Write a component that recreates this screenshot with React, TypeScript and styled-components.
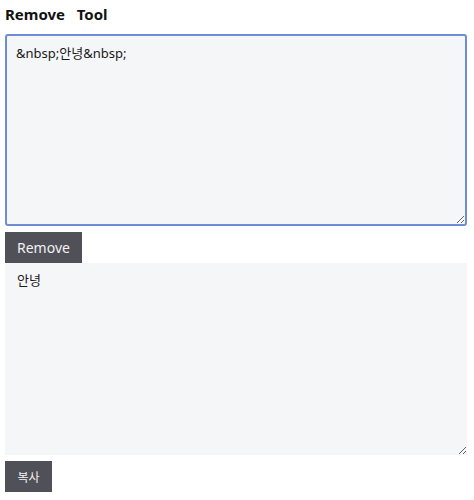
import React, { useState } from 'react'
import styled, { createGlobalStyle } from 'styled-components'

const GlobalStyle = createGlobalStyle`
  body {
    margin: 0;
    background: #ffffff;
    font-family: "Noto Sans", "Noto Sans CJK KR", sans-serif;
    color: #222;
  }
`

const Page = styled.div`
  display: flex;
  flex-direction: column;
  align-items: flex-start;
  padding: 4px 5px;
`

const Title = styled.h1`
  margin: 0 0 10px;
  font-size: 15px;
  line-height: 20px;
  font-weight: 700;
  white-space: pre;
  color: #111;
`

const Area = styled.textarea<{ $focused?: boolean }>`
  box-sizing: border-box;
  width: 462px;
  height: 192px;
  padding: 8px 10px;
  margin: 0;
  font-family: "Noto Sans", "Noto Sans CJK KR", sans-serif;
  font-size: 13px;
  line-height: 18px;
  color: #1a1a1a;
  background: #f5f6f8;
  border: ${p => (p.$focused ? '2px solid #6e8dd4' : '0')};
  border-radius: ${p => (p.$focused ? '3px' : '0')};
  padding-left: ${p => (p.$focused ? '9px' : '12px')};
  outline: none;
  resize: both;
`

const Button = styled.button<{ $compact?: boolean }>`
  height: 31px;
  margin: 6px 0 0;
  padding: 0 ${p => (p.$compact ? '12px' : '12px')};
  min-width: ${p => (p.$compact ? '47px' : '0')};
  border: 0;
  border-radius: 0;
  background: #505058;
  color: #f2f2f2;
  font-family: "Noto Sans", "Noto Sans CJK KR", sans-serif;
  font-size: ${p => (p.$compact ? '12px' : '14px')};
  cursor: pointer;
`

export default function App() {
  const [input, setInput] = useState('&nbsp;안녕&nbsp;')
  const [output, setOutput] = useState('안녕')

  const remove = () => setOutput(input.replace(/&nbsp;/g, ''))

  return (
    <Page>
      <GlobalStyle />
      <Title>{'Remove   Tool'}</Title>
      <Area $focused value={input} onChange={e => setInput(e.target.value)} spellCheck={false} />
      <Button onClick={remove}>Remove</Button>
      <Area value={output} onChange={e => setOutput(e.target.value)} />
      <Button $compact onClick={() => navigator.clipboard?.writeText(output)}>복사</Button>
    </Page>
  )
}
